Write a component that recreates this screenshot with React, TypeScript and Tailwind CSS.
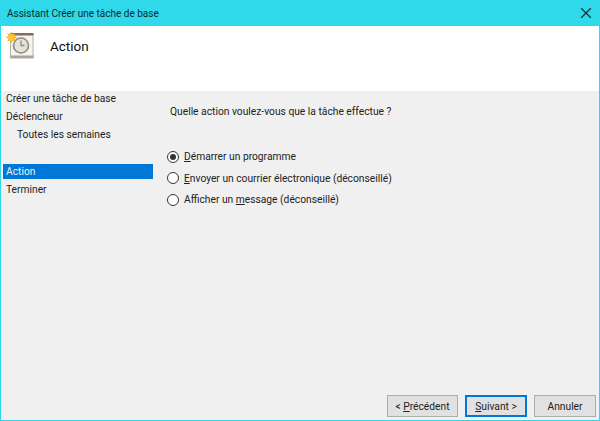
import type { ReactNode } from 'react'
import { X } from 'lucide-react'

function TaskIcon() {
  return (
    <svg width="30" height="30" viewBox="0 0 30 30" className="ml-[4px] mt-[4px]">
      <rect x="5.5" y="4" width="22.5" height="24" fill="#f6f4ee" stroke="#b8b1a6" />
      <rect x="5" y="3" width="23.5" height="2.5" fill="#8a6a58" />
      <rect x="6" y="25.5" width="22.5" height="2.5" fill="#a8a49b" />
      <circle cx="16" cy="15.5" r="7.5" fill="#e4e2da" stroke="#8d8d89" strokeWidth="1.6" />
      <path d="M16 10.5v5h3.5" fill="none" stroke="#a38d5c" strokeWidth="1.3" />
      <path d="M6.5 1.5l1 3 3-1.2-1.2 3 3 1-3 1.2 1.2 3-3-1.2-1 3-1.2-3-3 1.2 1.2-3-3-1.2 3-1-1.2-3 3 1.2z" fill="#f4a91c" />
      <circle cx="6.3" cy="7.5" r="3.2" fill="#ffc62e" />
    </svg>
  )
}

function Radio({ checked, label }: { checked?: boolean; label: ReactNode }) {
  return (
    <div className="flex h-[21.5px] items-center">
      <span className="flex h-[12px] w-[12px] shrink-0 items-center justify-center rounded-full border border-[#333] bg-white">
        {checked && <span className="h-[6px] w-[6px] rounded-full bg-[#333]" />}
      </span>
      <span className="ml-[5px] text-[#222]">{label}</span>
    </div>
  )
}

function Btn({ children, focused, className }: { children: ReactNode; focused?: boolean; className: string }) {
  return (
    <button
      className={`h-[22px] border bg-[#e1e1e1] text-[#222] ${className} ${
        focused ? 'border-2 border-[#0078d7]' : 'border-[#adadad]'
      }`}
    >
      {children}
    </button>
  )
}

export default function App() {
  return (
    <div className="flex h-[421px] w-[600px] flex-col overflow-hidden bg-[#2fd9e9] px-px pb-px font-['Roboto',sans-serif] text-[10.25px] leading-[15px]">
      {/* Title bar */}
      <div className="flex h-[26px] shrink-0 items-center justify-between pl-[6px] pr-[4px] text-[10px] text-[#0c2a30]">
        <span>Assistant Créer une tâche de base</span>
        <X size={18} strokeWidth={1.5} />
      </div>

      {/* Header */}
      <div className="flex h-[65px] shrink-0 items-start bg-white">
        <TaskIcon />
        <span className="ml-[15px] mt-[11px] text-[13.5px] leading-[18px] text-[#111]">Action</span>
      </div>

      {/* Body */}
      <div className="flex min-h-0 flex-1 bg-[#f0f0f0]">
        <div className="w-[152px] shrink-0 pl-[2px] text-[#222]">
          <div className="flex h-[14px] items-center pl-[3px]">Créer une tâche de base</div>
          <div className="mt-[4px] flex h-[14px] items-center pl-[3px]">Déclencheur</div>
          <div className="mt-[4px] flex h-[14px] items-center pl-[14px]">Toutes les semaines</div>
          <div className="mt-[23px] flex h-[15px] items-center bg-[#0078d7] pl-[3px] text-[#e6f2fb]">Action</div>
          <div className="mt-[3px] flex h-[14px] items-center pl-[3px]">Terminer</div>
        </div>

        <div className="flex min-w-0 flex-1 flex-col pl-[14px]">
          <div className="ml-[3px] mt-[13px] text-[#222]">Quelle action voulez-vous que la tâche effectue ?</div>
          <div className="mt-[27px]">
            <Radio checked label={<><span className="underline">D</span>émarrer un programme</>} />
            <Radio label={<><span className="underline">E</span>nvoyer un courrier électronique (déconseillé)</>} />
            <Radio label={<>Afficher un <span className="underline">m</span>essage (déconseillé)</>} />
          </div>

          <div className="mt-auto flex justify-end gap-[7px] pb-[3px] pr-[3px]">
            <Btn className="w-[71px]">&lt; <span className="underline">P</span>récédent</Btn>
            <Btn focused className="w-[62px]"><span className="underline">S</span>uivant &gt;</Btn>
            <Btn className="w-[62px]">Annuler</Btn>
          </div>
        </div>
      </div>
    </div>
  )
}
